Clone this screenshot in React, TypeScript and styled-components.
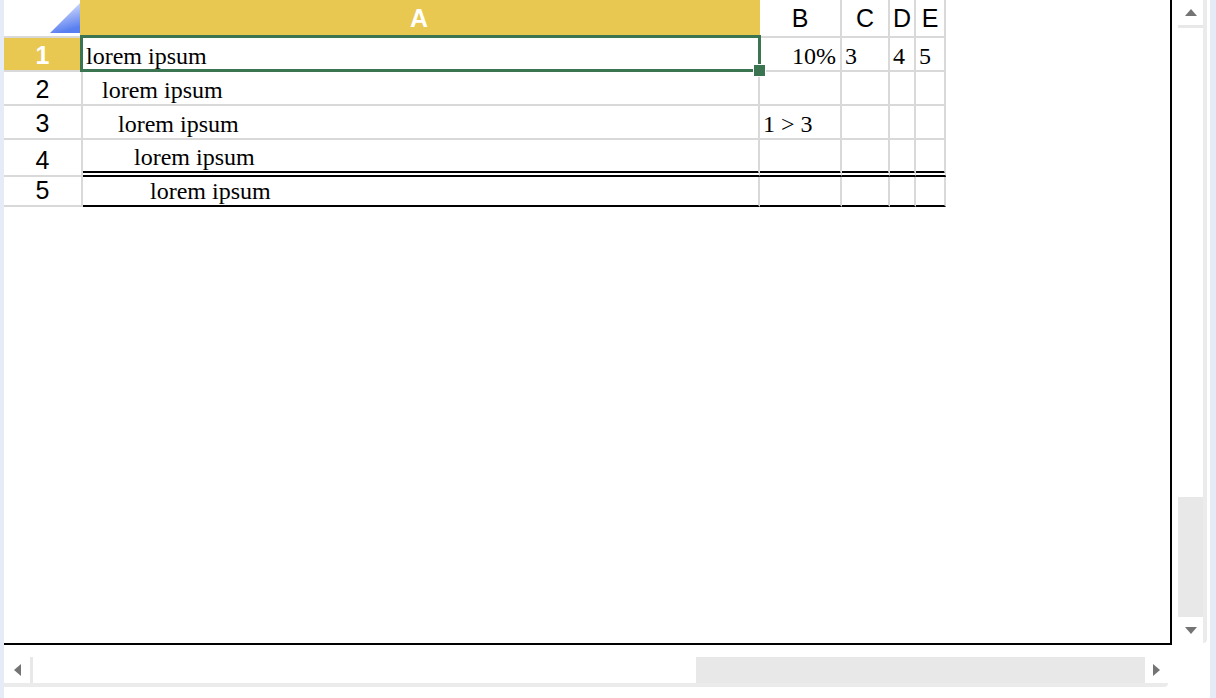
import React from 'react';
import styled, { createGlobalStyle } from 'styled-components';

const GlobalStyle = createGlobalStyle`
  html, body {
    margin: 0;
    padding: 0;
    background: #ffffff;
    font-family: "Liberation Sans", Arial, sans-serif;
  }
`;

type Row = {
  cells: string[];
  border?: 'double' | 'solid';
};

const columns = ['A', 'B', 'C', 'D', 'E'];

const rows: Row[] = [
  { cells: ['lorem ipsum', '10%', '3', '4', '5'] },
  { cells: ['lorem ipsum', '', '', '', ''] },
  { cells: ['lorem ipsum', '1 > 3', '', '', ''] },
  { cells: ['lorem ipsum', '', '', '', ''], border: 'double' },
  { cells: ['lorem ipsum', '', '', '', ''], border: 'solid' },
];

const App: React.FC = () => {
  return (
    <>
      <GlobalStyle />
      <Page>
        <Edge $width={4} />
        <Workspace>
          <Viewport>
            <Sheet>
              <Corner>
                <svg width="30" height="30" viewBox="0 0 30 30">
                  <defs>
                    <linearGradient id="corner" x1="0" y1="0" x2="0.3" y2="1">
                      <stop offset="0" stopColor="#f2f5fe" />
                      <stop offset="1" stopColor="#5a7ff0" />
                    </linearGradient>
                  </defs>
                  <polygon points="0,30 30,30 30,0" fill="url(#corner)" />
                </svg>
              </Corner>
              {columns.map((col, i) => (
                <ColumnHeader key={col} $active={i === 0}>
                  {col}
                </ColumnHeader>
              ))}
              {rows.map((row, r) => (
                <React.Fragment key={r}>
                  <RowHeader $active={r === 0}>{r + 1}</RowHeader>
                  {row.cells.map((text, c) => (
                    <Cell
                      key={c}
                      $indent={c === 0 ? r * 16 : 0}
                      $right={c === 1 && r === 0}
                      $border={row.border}
                    >
                      {text}
                      {r === 0 && c === 0 && (
                        <Selection>
                          <FillHandle />
                        </Selection>
                      )}
                    </Cell>
                  ))}
                </React.Fragment>
              ))}
            </Sheet>
          </Viewport>
          <VScroll>
            <ScrollButton $side="top">
              <Arrow $dir="up" />
            </ScrollButton>
            <Track $vertical>
              <Thumb $size={120} $vertical />
            </Track>
            <ScrollButton $side="bottom">
              <Arrow $dir="down" />
            </ScrollButton>
          </VScroll>
          <HScroll>
            <ScrollButton $side="left">
              <Arrow $dir="left" />
            </ScrollButton>
            <Track>
              <Thumb $size={449} />
            </Track>
            <ScrollButton $side="right">
              <Arrow $dir="right" />
            </ScrollButton>
          </HScroll>
        </Workspace>
        <Edge $width={6} />
      </Page>
    </>
  );
};

export default App;

const Page = styled.div`
  display: flex;
  width: 1216px;
  height: 698px;
  background: #ffffff;
  overflow: hidden;
`;

const Edge = styled.div<{ $width: number }>`
  flex: none;
  width: ${(p) => p.$width}px;
  background: #e5ecf8;
`;

const Workspace = styled.div`
  flex: 1;
  display: grid;
  grid-template-columns: 1168px 1fr;
  grid-template-rows: 645px 1fr;
`;

const Viewport = styled.div`
  box-sizing: border-box;
  border-right: 2px solid #000;
  border-bottom: 2px solid #000;
  overflow: hidden;
`;

const Sheet = styled.div`
  display: grid;
  grid-template-columns: 79px 677px 82px 48px 26px 30px;
  grid-template-rows: 38px 34px 34px 34px 37px 30px;
  width: max-content;
`;

const GridCell = styled.div`
  box-sizing: border-box;
  display: flex;
  border-right: 2px solid #d9d9d9;
  border-bottom: 2px solid #d9d9d9;
  white-space: nowrap;
`;

const Corner = styled(GridCell)`
  justify-content: flex-end;
  align-items: flex-end;
  padding: 0 1px 3px 0;
  border-right-color: #e6e6e6;
`;

const ColumnHeader = styled(GridCell)<{ $active: boolean }>`
  justify-content: center;
  align-items: flex-end;
  padding-bottom: 3px;
  font-size: 25px;
  font-weight: ${(p) => (p.$active ? 'bold' : 'normal')};
  color: ${(p) => (p.$active ? '#ffffff' : '#000000')};
  background: ${(p) => (p.$active ? '#e8c850' : '#ffffff')};
  ${(p) => (p.$active ? 'margin-left: -3px; border-right-color: #e8c850;' : '')}
`;

const RowHeader = styled(GridCell)<{ $active: boolean }>`
  justify-content: center;
  align-items: flex-end;
  font-size: 25px;
  font-weight: ${(p) => (p.$active ? 'bold' : 'normal')};
  color: ${(p) => (p.$active ? '#ffffff' : '#000000')};
  background: ${(p) => (p.$active ? '#e8c850' : '#ffffff')};
`;

const Cell = styled(GridCell)<{
  $indent: number;
  $right: boolean;
  $border?: 'double' | 'solid';
}>`
  position: relative;
  align-items: flex-end;
  justify-content: ${(p) => (p.$right ? 'flex-end' : 'flex-start')};
  padding: 0 ${(p) => (p.$right ? 4 : 2)}px 0 ${(p) => 3 + p.$indent}px;
  font-family: "Liberation Serif", "Times New Roman", serif;
  font-size: 24px;
  color: #000;
  ${(p) => p.$border === 'double' && 'border-bottom: 6px double #000;'}
  ${(p) => p.$border === 'solid' && 'border-bottom: 2px solid #000;'}
`;

const Selection = styled.div`
  position: absolute;
  z-index: 2;
  left: -3px;
  top: -3px;
  right: -3px;
  bottom: -2px;
  border: 3px solid #3a7450;
  pointer-events: none;
`;

const FillHandle = styled.div`
  position: absolute;
  right: -8px;
  bottom: -8px;
  width: 13px;
  height: 13px;
  box-sizing: border-box;
  background: #3a7450;
  border: 1px solid #ffffff;
`;

const VScroll = styled.div`
  box-sizing: border-box;
  display: flex;
  flex-direction: column;
  width: 29px;
  height: 643px;
  margin-left: 6px;
  border-right: 4px solid #ebebeb;
  border-bottom-right-radius: 4px;
`;

const HScroll = styled.div`
  box-sizing: border-box;
  display: flex;
  height: 30px;
  margin: 12px 4px 0 0;
  border-bottom: 4px solid #ebebeb;
  border-bottom-right-radius: 4px;
`;

const ScrollButton = styled.div<{ $side: 'top' | 'bottom' | 'left' | 'right' }>`
  flex: none;
  display: flex;
  align-items: center;
  justify-content: center;
  background: #ffffff;
  ${(p) => p.$side === 'top' && 'height: 25px; border-bottom: 3px solid #e8e8e8;'}
  ${(p) => p.$side === 'bottom' && 'height: 26px;'}
  ${(p) => p.$side === 'left' && 'width: 26px; border-right: 3px solid #e8e8e8;'}
  ${(p) => p.$side === 'right' && 'width: 23px;'}
`;

const Track = styled.div<{ $vertical?: boolean }>`
  flex: 1;
  display: flex;
  flex-direction: ${(p) => (p.$vertical ? 'column' : 'row')};
  justify-content: flex-end;
  background: #ffffff;
`;

const Thumb = styled.div<{ $size: number; $vertical?: boolean }>`
  flex: none;
  background: #e8e8e8;
  ${(p) => (p.$vertical ? `height: ${p.$size}px;` : `width: ${p.$size}px;`)}
`;

const Arrow = styled.div<{ $dir: 'up' | 'down' | 'left' | 'right' }>`
  width: 0;
  height: 0;
  ${(p) =>
    p.$dir === 'up'
      ? 'border-left: 6px solid transparent; border-right: 6px solid transparent; border-bottom: 7px solid #747474;'
      : p.$dir === 'down'
      ? 'border-left: 6px solid transparent; border-right: 6px solid transparent; border-top: 7px solid #747474;'
      : p.$dir === 'left'
      ? 'border-top: 6px solid transparent; border-bottom: 6px solid transparent; border-right: 7px solid #747474;'
      : 'border-top: 6px solid transparent; border-bottom: 6px solid transparent; border-left: 7px solid #747474;'}
`;
